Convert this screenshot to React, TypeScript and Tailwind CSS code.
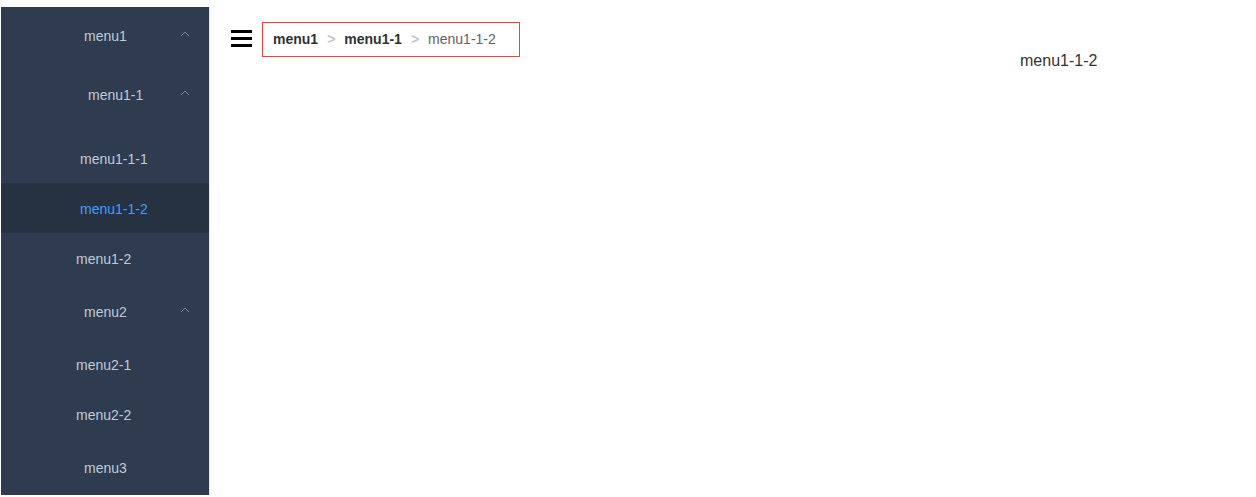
import React from "react";

const Arrow = () => (
  <svg width="10" height="6" viewBox="0 0 10 6" className="absolute" style={{ left: 179, top: "50%", marginTop: -4 }}>
    <path d="M1 5 L5 1 L9 5" fill="none" stroke="#7d8794" strokeWidth="1" />
  </svg>
);

function Row({
  label,
  pl,
  h,
  arrow,
  active,
  extra,
}: {
  label: string;
  pl: number;
  h: string;
  arrow?: boolean;
  active?: boolean;
  extra?: string;
}) {
  return (
    <div
      className={`relative flex items-center pt-[2px] ${h} ${extra ?? ""} ${active ? "bg-[#263242] text-[#409eff]" : "text-[#bfcbd9]"}`}
      style={{ paddingLeft: pl }}
    >
      <span>{label}</span>
      {arrow && <Arrow />}
    </div>
  );
}

export default function App() {
  return (
    <div className="flex w-[1256px] h-[497px] bg-white text-[14px] overflow-hidden" style={{ fontFamily: '"Liberation Sans", Arial, sans-serif' }}>
      <div className="ml-[1px] mt-[7px] w-[209px] h-[488px] bg-[#2f3c4f] border-r border-[#e6e6e6] flex flex-col shrink-0">
        <Row label="menu1" pl={83} h="h-[56px]" arrow />
        <div className="h-[70px] flex flex-col">
          <Row label="menu1-1" pl={87} h="h-[56px]" extra="mt-[3px]" arrow />
        </div>
        <Row label="menu1-1-1" pl={79} h="h-[50px]" />
        <Row label="menu1-1-2" pl={79} h="h-[50px]" active />
        <Row label="menu1-2" pl={75} h="h-[50px]" />
        <Row label="menu2" pl={83} h="h-[56px]" arrow />
        <Row label="menu2-1" pl={75} h="h-[50px]" />
        <Row label="menu2-2" pl={75} h="h-[50px]" />
        <Row label="menu3" pl={83} h="h-[56px]" />
      </div>
      <div className="flex-1 flex items-start pt-[22px]">
        <div className="ml-[21px] mt-[8px] w-[21px] flex flex-col gap-[4px]">
          <div className="h-[3px] bg-black" />
          <div className="h-[3px] bg-black" />
          <div className="h-[3px] bg-black" />
        </div>
        <div className="ml-[10px] w-[258px] h-[35px] border border-[#ff3b3b] flex items-center pl-[10px]">
          <span className="font-bold text-[#303133]">menu1</span>
          <span className="mx-[9px] font-bold text-[#c0c4cc]">&gt;</span>
          <span className="font-bold text-[#303133]">menu1-1</span>
          <span className="mx-[9px] font-bold text-[#c0c4cc]">&gt;</span>
          <span className="text-[#606266]">menu1-1-2</span>
        </div>
        <div className="ml-[500px] mt-[30px] text-[16px] text-[#333] leading-[18px]">menu1-1-2</div>
      </div>
    </div>
  );
}
